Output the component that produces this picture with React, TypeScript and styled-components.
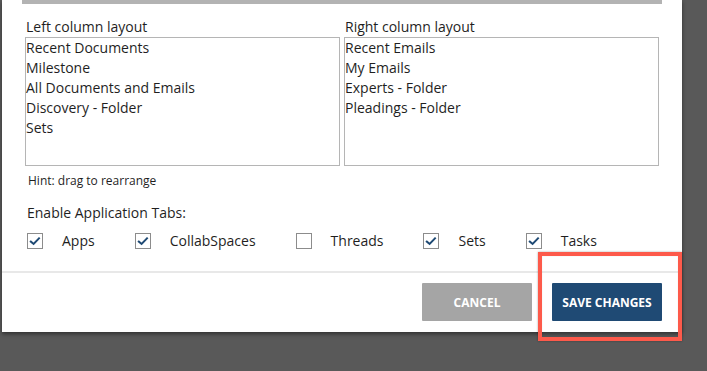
import React from "react";
import styled, { createGlobalStyle } from "styled-components";

const Global = createGlobalStyle`
  html, body { margin: 0; padding: 0; }
  body {
    background: #595959;
    font-family: "Open Sans", "Liberation Sans", sans-serif;
    color: #1f1f1f;
    width: 707px;
    height: 371px;
    overflow: hidden;
  }
`;

const Stage = styled.div`
  position: relative;
  width: 707px;
  height: 371px;
`;

const Modal = styled.div`
  margin-left: 2px;
  width: 680px;
  height: 332px;
  background: #fff;
  display: flex;
  flex-direction: column;
  box-shadow: 0 2px 4px rgba(0, 0, 0, 0.45);
`;

const TopBar = styled.div`
  height: 4px;
  margin: 0 20px;
  background: #b3b3b3;
`;

const Body = styled.div`
  padding: 13px 0 0 23px;
  display: flex;
  flex-direction: column;
`;

const Columns = styled.div`
  display: grid;
  grid-template-columns: 315px 315px;
  column-gap: 4px;
`;

const Column = styled.div`
  display: flex;
  flex-direction: column;
`;

const FieldLabel = styled.div`
  font-size: 14px;
  line-height: 20px;
  padding-left: 1px;
`;

const ListBox = styled.div`
  box-sizing: border-box;
  height: 129px;
  border: 1px solid #b5b5b5;
`;

const ListItem = styled.div`
  font-size: 14px;
  line-height: 20px;
  white-space: nowrap;
`;

const Hint = styled.div`
  margin: 7px 0 0 3px;
  font-size: 12px;
  line-height: 16px;
`;

const SectionLabel = styled.div`
  margin: 14px 0 0 2px;
  font-size: 14px;
  line-height: 20px;
`;

const TabRow = styled.div`
  margin: 8px 0 0 2px;
  display: flex;
  align-items: center;
  gap: 40px;
  height: 20px;
`;

const TabOption = styled.label`
  display: flex;
  align-items: center;
  gap: 19px;
  font-size: 14px;
  line-height: 20px;
`;

const Box = styled.span`
  box-sizing: border-box;
  width: 16px;
  height: 16px;
  border: 1px solid #8c8c8c;
  background: #fff;
  display: flex;
  align-items: center;
  justify-content: center;
`;

const Divider = styled.div`
  margin-top: 20px;
  height: 2px;
  background: #e8e8e8;
`;

const Footer = styled.div`
  display: flex;
  justify-content: flex-end;
  gap: 20px;
  padding: 10px 20px 0 0;
`;

const Button = styled.button<{ $primary?: boolean }>`
  width: 110px;
  height: 38px;
  border: none;
  border-radius: 1px;
  background: ${(p) => (p.$primary ? "#1f4a74" : "#a5a5a5")};
  color: #fff;
  font-family: "Open Sans", "Liberation Sans", sans-serif;
  font-weight: 700;
  font-size: 12px;
  text-transform: uppercase;
  padding: 0;
`;

const Highlight = styled.div`
  position: absolute;
  left: 538px;
  top: 252px;
  width: 144px;
  height: 89px;
  box-sizing: border-box;
  border: 4.5px solid #fd5a4b;
  box-shadow: 0 0 2px rgba(0, 0, 0, 0.35), inset 0 0 1px rgba(0, 0, 0, 0.2);
  pointer-events: none;
`;

const Check = ({ checked }: { checked: boolean }) => (
  <Box>
    {checked && (
      <svg width="14" height="14" viewBox="0 0 14 14">
        <path d="M2.8 7.6 L5.6 10 L11 4.4" fill="none" stroke="#1f4a74" strokeWidth="2" strokeLinecap="square" />
      </svg>
    )}
  </Box>
);

const left = ["Recent Documents", "Milestone", "All Documents and Emails", "Discovery - Folder", "Sets"];
const right = ["Recent Emails", "My Emails", "Experts - Folder", "Pleadings - Folder"];
const tabs: [string, boolean][] = [
  ["Apps", true],
  ["CollabSpaces", true],
  ["Threads", false],
  ["Sets", true],
  ["Tasks", true],
];

export default function App() {
  return (
    <>
      <Global />
      <Stage>
        <Modal>
          <TopBar />
          <Body>
            <Columns>
              <Column>
                <FieldLabel>Left column layout</FieldLabel>
                <ListBox>
                  {left.map((t) => (
                    <ListItem key={t}>{t}</ListItem>
                  ))}
                </ListBox>
              </Column>
              <Column>
                <FieldLabel>Right column layout</FieldLabel>
                <ListBox>
                  {right.map((t) => (
                    <ListItem key={t}>{t}</ListItem>
                  ))}
                </ListBox>
              </Column>
            </Columns>
            <Hint>Hint: drag to rearrange</Hint>
            <SectionLabel>Enable Application Tabs:</SectionLabel>
            <TabRow>
              {tabs.map(([name, on]) => (
                <TabOption key={name}>
                  <Check checked={on} />
                  {name}
                </TabOption>
              ))}
            </TabRow>
          </Body>
          <Divider />
          <Footer>
            <Button>Cancel</Button>
            <Button $primary>Save Changes</Button>
          </Footer>
        </Modal>
        <Highlight />
      </Stage>
    </>
  );
}
